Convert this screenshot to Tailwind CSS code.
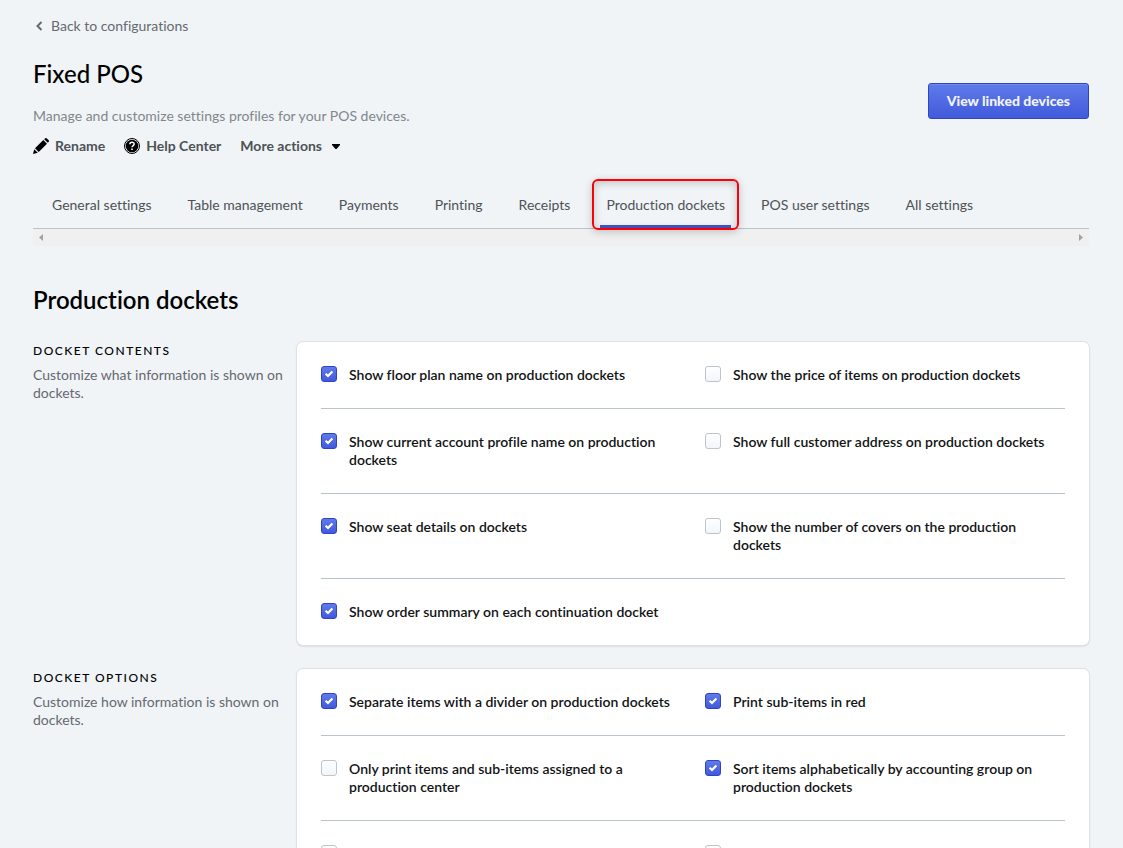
<!DOCTYPE html>
<html lang="en">
<head>
    <meta charset="UTF-8">
    <meta name="viewport" content="width=device-width, initial-scale=1.0">
    <title>Fixed POS - Production dockets</title>
    <script src="https://cdn.jsdelivr.net/npm/@tailwindcss/browser@4"></script>
    <style>
        body {
            font-family: Lato, 'Liberation Sans', sans-serif;
            font-variant-ligatures: no-common-ligatures;
        }
        .check {
            appearance: none;
            flex-shrink: 0;
            width: 16px;
            height: 16px;
            border: 1px solid #bcc5cc;
            border-radius: 3px;
            background: linear-gradient(#ffffff, #f3f5f9);
        }
        .check:checked {
            border-color: #3043c4;
            background: url("data:image/svg+xml,%3Csvg xmlns='http://www.w3.org/2000/svg' viewBox='0 0 14 14'%3E%3Cpath d='M3.600 6.800l2.400 2.200 4.400-4.500' fill='none' stroke='white' stroke-width='2.200'/%3E%3C/svg%3E"), linear-gradient(#5f7be9, #415adb);
        }
    </style>
</head>
<body class="h-screen overflow-hidden bg-[#f0f4f7] text-sm leading-[18px] text-[#4d5256]">
    <div class="pl-[33px] pr-[34px] pt-[17px]">
        <header class="flex items-center justify-between">
            <div>
                <a href="#" class="flex items-center gap-2 pl-[2px] text-[#66696f]">
                    <svg class="h-[10px] w-2" viewBox="0 0 8 10" fill="none" stroke="currentColor" stroke-width="2"><path d="M6.500 1L2.500 5l4 4"/></svg>
                    Back to configurations
                </a>
                <h1 class="mt-6 text-2xl leading-[30px] font-medium text-black">Fixed POS</h1>
                <p class="mt-[18px] text-[#82878c]">Manage and customize settings profiles for your POS devices.</p>
                <div class="mt-3 flex items-center gap-[19px] font-bold">
                    <button type="button" class="flex items-center gap-[6px]">
                        <svg class="size-4 text-black" viewBox="0 0 16 16" fill="currentColor"><path d="M0 16l1.200-4.800 3.600 3.600zM2 10.300L10.300 2l3.700 3.700L5.700 14zM11.200 1.200l.7-.7q1-1 2 0l1.600 1.600q1 1 0 2l-.7.7z"/></svg>
                        Rename
                    </button>
                    <a href="#" class="flex items-center gap-[6px]">
                        <svg class="size-4" viewBox="0 0 16 16" fill="none"><circle cx="8" cy="8" r="7.500" stroke="#000"/><circle cx="8" cy="8" r="6.300" fill="#000"/><path d="M5.900 6.300c0-2.700 4.300-2.600 4.300-.2C10.200 7.500 8 7.600 8 9.300" stroke="#fff" stroke-width="1.500"/><path d="M7.200 10.400h1.600V12H7.200z" fill="#fff"/></svg>
                        Help Center
                    </a>
                    <button type="button" class="flex items-center gap-[10px]">
                        More actions
                        <svg class="h-[5px] w-2" viewBox="0 0 8 5" fill="#000"><path d="M0 0h8v1L4.500 5h-1L0 1z"/></svg>
                    </button>
                </div>
            </div>
            <button type="button" class="mt-[30px] h-9 rounded-[3px] border border-[#3043c4] bg-linear-to-b from-[#5f7be9] to-[#415adb] px-[18px] font-black text-[#f1f3fd] inset-shadow-[0_1px_0_#718aee]">View linked devices</button>
        </header>

        <nav class="mt-6 flex gap-6 border-b border-[#b9c3ca] pl-[13px] whitespace-nowrap">
            <a href="#" class="px-[6px] pt-[17px] pb-[14px]">General settings</a>
            <a href="#" class="px-[6px] pt-[17px] pb-[14px]">Table management</a>
            <a href="#" class="px-[6px] pt-[17px] pb-[14px]">Payments</a>
            <a href="#" class="px-[6px] pt-[17px] pb-[14px]">Printing</a>
            <a href="#" class="px-[6px] pt-[17px] pb-[14px]">Receipts</a>
            <a href="#" aria-current="page" class="relative border-b-3 border-[#4255c7] px-[6px] pt-[17px] pb-[11px]">
                Production dockets
                <span class="absolute -inset-x-2 top-0 -bottom-[5px] rounded-md border-2 border-[#fb0007] shadow-[0_2px_8px_#00000033,inset_0_2px_8px_#00000033]"></span>
            </a>
            <a href="#" class="px-[6px] pt-[17px] pb-[14px]">POS user settings</a>
            <a href="#" class="px-[6px] pt-[17px] pb-[14px]">All settings</a>
        </nav>
        <!-- Tab scroller -->
        <div class="flex h-[17px] items-center justify-between bg-[#f0f0f0] px-[6px]">
            <svg class="h-[7px] w-1" viewBox="0 0 4 7" fill="#a3a3a3"><path d="M4 0v7L0 3.500z"/></svg>
            <svg class="h-[7px] w-1" viewBox="0 0 4 7" fill="#a3a3a3"><path d="M0 0v7l4-3.500z"/></svg>
        </div>

        <main>
            <h2 class="mt-[39px] text-2xl leading-[30px] font-semibold text-black">Production dockets</h2>

            <section class="mt-[27px] flex">
                <div class="w-[264px] shrink-0 pr-3 text-[#66696f]">
                    <h3 class="text-xs leading-[18px] font-medium tracking-[1.500px] text-black uppercase">Docket contents</h3>
                    <p class="mt-[6px]">Customize what information is shown on dockets.</p>
                </div>
                <div class="flex-1 divide-y divide-[#b9c3ca] rounded-md bg-white px-6 font-semibold text-[#111314] shadow-[0_0_0_1px_#dde2e7,0_1px_2px_#00000040]">
                    <div class="grid grid-cols-2 gap-6 py-6">
                        <label class="flex gap-3"><input type="checkbox" class="check" checked>Show floor plan name on production dockets</label>
                        <label class="flex gap-3"><input type="checkbox" class="check">Show the price of items on production dockets</label>
                    </div>
                    <div class="grid grid-cols-2 gap-6 py-6">
                        <label class="flex gap-3"><input type="checkbox" class="check" checked>Show current account profile name on production dockets</label>
                        <label class="flex gap-3"><input type="checkbox" class="check">Show full customer address on production dockets</label>
                    </div>
                    <div class="grid grid-cols-2 gap-6 py-6">
                        <label class="flex gap-3"><input type="checkbox" class="check" checked>Show seat details on dockets</label>
                        <label class="flex gap-3"><input type="checkbox" class="check">Show the number of covers on the production dockets</label>
                    </div>
                    <div class="grid grid-cols-2 gap-6 py-6">
                        <label class="flex gap-3"><input type="checkbox" class="check" checked>Show order summary on each continuation docket</label>
                    </div>
                </div>
            </section>

            <section class="mt-6 flex">
                <div class="w-[264px] shrink-0 pr-3 text-[#66696f]">
                    <h3 class="text-xs leading-[18px] font-medium tracking-[1.500px] text-black uppercase">Docket options</h3>
                    <p class="mt-[6px]">Customize how information is shown on dockets.</p>
                </div>
                <div class="flex-1 divide-y divide-[#b9c3ca] rounded-md bg-white px-6 font-semibold text-[#111314] shadow-[0_0_0_1px_#dde2e7,0_1px_2px_#00000040]">
                    <div class="grid grid-cols-2 gap-6 py-6">
                        <label class="flex gap-3"><input type="checkbox" class="check" checked>Separate items with a divider on production dockets</label>
                        <label class="flex gap-3"><input type="checkbox" class="check" checked>Print sub-items in red</label>
                    </div>
                    <div class="grid grid-cols-2 gap-6 py-6">
                        <label class="flex gap-3"><input type="checkbox" class="check">Only print items and sub-items assigned to a production center</label>
                        <label class="flex gap-3"><input type="checkbox" class="check" checked>Sort items alphabetically by accounting group on production dockets</label>
                    </div>
                    <div class="grid grid-cols-2 gap-6 py-6">
                        <input type="checkbox" class="check" aria-label="Docket option">
                        <input type="checkbox" class="check" aria-label="Docket option">
                    </div>
                </div>
            </section>
        </main>
    </div>
</body>
</html>
